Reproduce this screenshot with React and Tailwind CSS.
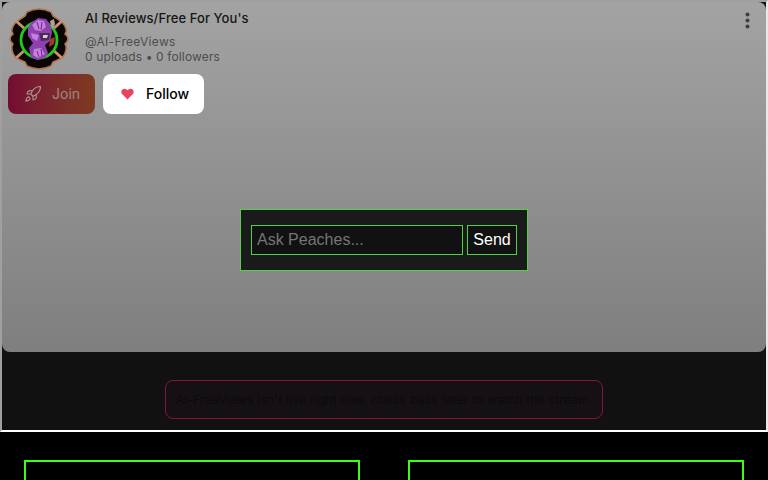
import { Rocket } from "lucide-react";

const Logo = () => (
  <svg width="62" height="62" viewBox="0 0 62 62" className="shrink-0">
    <path d="M19 4 Q31 -2 43 4 L45 8 L54 14 Q59 20 58 24 L57 26 Q63 31 57 36 L58 38 Q59 44 54 50 L45 54 L43 58 Q31 64 19 58 L17 54 L8 50 Q3 44 4 38 L5 36 Q-1 31 5 26 L4 24 Q3 20 8 14 L17 8 Z" fill="#0a0605" stroke="#b5714c" strokeWidth="1.6" />
    <path d="M8 13 L17 21 M54 13 L45 21 M8 50 L17 42 M54 50 L45 42" stroke="#c98f72" strokeWidth="3" />
    <circle cx="31" cy="32" r="18" fill="none" stroke="#22c81e" strokeWidth="2.8" />
    <path d="M23 15 L30 10 L38 11 L42 16 L44 24 L42 33 L37 37 L40 45 L37 50 L29 52 L23 49 L21 40 L25 35 L20 28 L20 20 Z" fill="#8e3fb0" />
    <path d="M24 17 L30 12 L36 13 L38 19 L33 23 L27 22 Z M26 41 L33 40 L37 46 L30 50 L25 47 Z M23 25 L31 27 L29 33 L24 30 Z" fill="#c57fdc" />
    <path d="M29 14 L31 21 M34 14 L33 22 M29 43 L31 49 M33 41 L34 48" stroke="#6a2a88" strokeWidth="1" />
    <path d="M31 25 L42 25 L41 32 L33 33 Z" fill="#4a2c52" />
    <path d="M35 27 L40 27 L39 30 L35 30 Z" fill="#d9c9dc" />
    <path d="M42 31 L47 29 L46 36 L41 39 Z" fill="#a8342c" />
    <path d="M42 13 L46 11 L47 16 L45 21 L43 18 Z" fill="#a8a294" />
  </svg>
);

const Heart = () => (
  <svg width="13" height="12" viewBox="0 0 13 12">
    <path d="M6.5 11.5 L0.6 5.6 Q-0.4 2.4 2 1 Q4.6 0 6.5 2.2 Q8.4 0 11 1 Q13.4 2.4 12.4 5.6 Z" fill="#e8435f" />
  </svg>
);

export default function App() {
  return (
    <div className="w-[768px] h-[480px] overflow-hidden bg-black font-['Inter',sans-serif]">
      <div className="h-[432px] bg-[#111111] border-2 border-[#a0a0a0] border-r-[#e8e8e8] border-b-white">
        <div className="h-[350px] rounded-lg bg-gradient-to-b from-[#a3a3a3] to-[#7f7f7f] flex flex-col">
          <div className="flex items-start pl-[6px] pr-[17px] pt-[6px]">
            <Logo />
            <div className="ml-[15px] flex-1">
              <p className="text-[13px] leading-5 font-medium tracking-[0.08px] text-[#161616]">AI Reviews/Free For You's</p>
              <p className="mt-[6px] text-xs leading-[15px] tracking-[0.3px] text-[#4d4d4d]">@AI-FreeViews</p>
              <p className="text-xs leading-[15px] tracking-[0.13px] text-[#4d4d4d]">0 uploads • 0 followers</p>
            </div>
            <div className="flex flex-col gap-[3px] pt-[5px]">
              <span className="w-[3px] h-[3px] rounded-full bg-[#3f3f3f] ring-[0.5px] ring-[#3f3f3f]" />
              <span className="w-[3px] h-[3px] rounded-full bg-[#3f3f3f] ring-[0.5px] ring-[#3f3f3f]" />
              <span className="w-[3px] h-[3px] rounded-full bg-[#3f3f3f] ring-[0.5px] ring-[#3f3f3f]" />
            </div>
          </div>
          <div className="flex gap-2 pl-[6px] mt-[4px]">
            <button className="w-[87px] h-10 rounded-lg bg-gradient-to-r from-[#740a33] to-[#7f3a20] flex items-center pl-[16px] gap-[10px] text-sm text-[#a08888]">
              <Rocket size={18} strokeWidth={1.5} className="text-[#ab9393]" />
              Join
            </button>
            <button className="w-[101px] h-10 rounded-lg bg-white flex items-center pl-[18px] gap-[12px] text-sm font-medium text-black">
              <Heart />
              Follow
            </button>
          </div>
          <div className="flex-1 flex justify-center items-start pt-[95px]">
            <div className="w-[288px] h-[62px] bg-[#1a1a1a] border border-[#4fd24a] flex items-center gap-1 px-[10px] font-['Liberation_Sans',sans-serif]">
              <input
                placeholder="Ask Peaches..."
                className="w-[212px] h-[30px] px-[5px] bg-[#111111] border border-[#4fd24a] text-white text-base placeholder:text-[#757575] outline-none"
              />
              <button className="w-[50px] h-[30px] bg-[#111111] border border-[#4fd24a] text-white text-base">Send</button>
            </div>
          </div>
        </div>
        <div className="flex justify-center pt-[28px]">
          <div className="w-[438px] h-[39px] rounded-lg border border-[#8a1240] bg-[#151013] flex items-center justify-center text-xs tracking-[0.22px] text-[#0b0b0b] whitespace-nowrap">
            AI-FreeViews isn't live right now, check back later to watch the stream.
          </div>
        </div>
      </div>
      <div className="grid grid-cols-2 gap-[48px] px-[24px] pt-[28px]">
        <div className="h-[100px] border-2 border-[#39ff14]" />
        <div className="h-[100px] border-2 border-[#39ff14]" />
      </div>
    </div>
  );
}
